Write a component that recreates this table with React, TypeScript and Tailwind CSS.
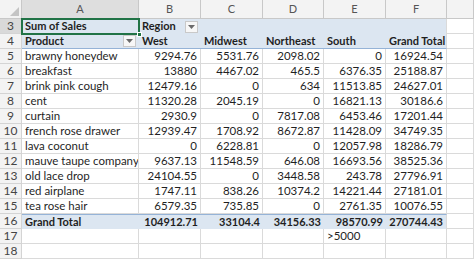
import clsx from "clsx";

const cols = ["A", "B", "C", "D", "E", "F", ""];

const rows: string[][] = [
  ["brawny honeydew", "9294.76", "5531.76", "2098.02", "0", "16924.54"],
  ["breakfast", "13880", "4467.02", "465.5", "6376.35", "25188.87"],
  ["brink pink cough", "12479.16", "0", "634", "11513.85", "24627.01"],
  ["cent", "11320.28", "2045.19", "0", "16821.13", "30186.6"],
  ["curtain", "2930.9", "0", "7817.08", "6453.46", "17201.44"],
  ["french rose drawer", "12939.47", "1708.92", "8672.87", "11428.09", "34749.35"],
  ["lava coconut", "0", "6228.81", "0", "12057.98", "18286.79"],
  ["mauve taupe company", "9637.13", "11548.59", "646.08", "16693.56", "38525.36"],
  ["old lace drop", "24104.55", "0", "3448.58", "243.78", "27796.91"],
  ["red airplane", "1747.11", "838.26", "10374.2", "14221.44", "27181.01"],
  ["tea rose hair", "6579.35", "735.85", "0", "2761.35", "10076.55"],
];

const totals = ["104912.71", "33104.4", "34156.33", "98570.99", "270744.43"];

function Dropdown() {
  return (
    <span className="flex h-[12px] w-[13px] shrink-0 items-center justify-center border border-[#c9c9c9] bg-[#f7f7f7]">
      <svg width="7" height="4" viewBox="0 0 7 4">
        <path d="M0 0h7L3.5 4z" fill="#6b6b6b" />
      </svg>
    </span>
  );
}

function RowNum({ n, active }: { n: number; active?: boolean }) {
  return (
    <div
      className={clsx(
        "flex items-center justify-center border-b border-r border-[#d4d4d4] text-[12px] text-[#444]",
        active ? "bg-[#d9d9d9]" : "bg-[#f3f3f3]",
      )}
    >
      {n}
    </div>
  );
}

const cell = "flex items-center overflow-hidden whitespace-nowrap px-[3px]";
const grid = "border-b border-r border-[#dadada] bg-white";
const head = "bg-[#dce6f1] text-[11px] font-bold";

export default function App() {
  return (
    <div
      className="relative h-[259px] w-[474px] overflow-hidden bg-white text-[11.5px] text-[#1f1f1f]"
      style={{ fontFamily: "Lato, 'Liberation Sans', sans-serif" }}
    >
      <div className="grid grid-cols-[22px_117px_62px_62px_61px_62px_61px_27px] grid-rows-[19px_repeat(16,15px)]">
        {/* column header row */}
        <div className="relative border-b border-r border-[#c8c8c8] bg-[#f3f3f3]">
          <svg className="absolute bottom-[2px] right-[2px]" width="9" height="9" viewBox="0 0 9 9">
            <path d="M9 0V9H0z" fill="#c4c4c4" />
          </svg>
        </div>
        {cols.map((c, i) => (
          <div
            key={i}
            className={clsx(
              "flex items-center justify-center border-b border-r border-[#c8c8c8] pt-[1px] text-[11px] text-[#555]",
              i === 0 ? "bg-[#dedede]" : "bg-[#f3f3f3]",
            )}
          >
            {c}
          </div>
        ))}

        {/* row 3 */}
        <RowNum n={3} active />
        <div className={clsx(cell, head)}>Sum of Sales</div>
        <div className={clsx(cell, head, "justify-between")}>
          Region
          <Dropdown />
        </div>
        <div className="bg-[#dce6f1]" />
        <div className="bg-[#dce6f1]" />
        <div className="bg-[#dce6f1]" />
        <div className="border-r border-[#dadada] bg-[#dce6f1]" />
        <div className={grid} />

        {/* row 4 */}
        <RowNum n={4} />
        <div className={clsx(cell, head, "justify-between border-b border-[#95b3d7]")}>
          Product
          <Dropdown />
        </div>
        {["West", "Midwest", "Northeast", "South", "Grand Total"].map((h, i) => (
          <div
            key={h}
            className={clsx(cell, head, "border-b border-[#95b3d7]", i === 4 && "border-r border-r-[#dadada]")}
          >
            {h}
          </div>
        ))}
        <div className={grid} />

        {rows.map((r, ri) => (
          <div key={ri} className="contents">
            <RowNum n={ri + 5} />
            {r.map((v, ci) => (
              <div key={ci} className={clsx(cell, grid, ci > 0 && "justify-end")}>
                {v}
              </div>
            ))}
            <div className={grid} />
          </div>
        ))}

        {/* grand total */}
        <RowNum n={16} />
        <div className={clsx(cell, head, "border-t border-[#95b3d7]")}>Grand Total</div>
        {totals.map((t, i) => (
          <div
            key={i}
            className={clsx(
              cell,
              head,
              "justify-end border-t border-[#95b3d7]",
              i === 4 && "border-r border-r-[#dadada]",
            )}
          >
            {t}
          </div>
        ))}
        <div className={grid} />

        {/* rows 17, 18 */}
        {[17, 18].map((n) => (
          <div key={n} className="contents">
            <RowNum n={n} />
            {[0, 1, 2, 3, 4, 5, 6].map((c) => (
              <div key={c} className={clsx(cell, grid)}>
                {n === 17 && c === 4 ? ">5000" : ""}
              </div>
            ))}
          </div>
        ))}
      </div>

      {/* active cell A3 */}
      <div className="pointer-events-none absolute left-[21px] top-[18px] h-[17px] w-[119px] border-2 border-[#217346]">
        <div className="absolute -bottom-[4px] -right-[4px] h-[5px] w-[5px] border border-white bg-[#217346]" />
      </div>
    </div>
  );
}
